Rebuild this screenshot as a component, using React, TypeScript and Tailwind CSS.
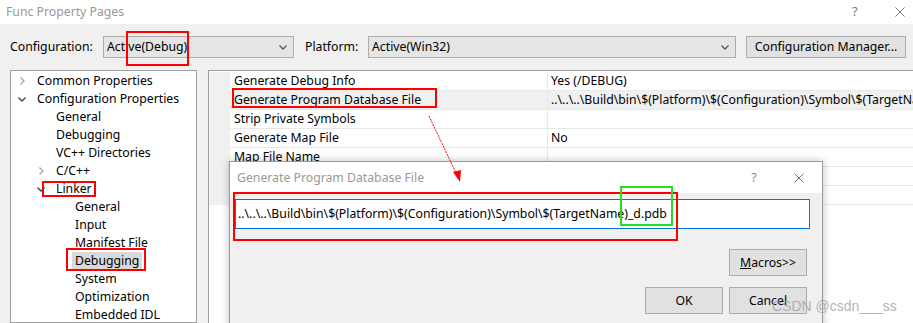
import React from 'react';

// Func Property Pages dialog with the PDB path editor popped over it

type TreeItem = { label: string; level: 0 | 1 | 2; chevron?: 'right' | 'down'; selected?: boolean };

const treeItems: TreeItem[] = [
  { label: 'Common Properties', level: 0, chevron: 'right' },
  { label: 'Configuration Properties', level: 0, chevron: 'down' },
  { label: 'General', level: 1 },
  { label: 'Debugging', level: 1 },
  { label: 'VC++ Directories', level: 1 },
  { label: 'C/C++', level: 1, chevron: 'right' },
  { label: 'Linker', level: 1, chevron: 'down' },
  { label: 'General', level: 2 },
  { label: 'Input', level: 2 },
  { label: 'Manifest File', level: 2 },
  { label: 'Debugging', level: 2, selected: true },
  { label: 'System', level: 2 },
  { label: 'Optimization', level: 2 },
  { label: 'Embedded IDL', level: 2 },
];

const levelPad = ['pl-[7px]', 'pl-[26px]', 'pl-[45px]'];

const gridRows = [
  { name: 'Generate Debug Info', value: 'Yes (/DEBUG)' },
  { name: 'Generate Program Database File', value: '..\\..\\..\\Build\\bin\\$(Platform)\\$(Configuration)\\Symbol\\$(TargetName)_d.pdb', selected: true },
  { name: 'Strip Private Symbols', value: '' },
  { name: 'Generate Map File', value: 'No' },
  { name: 'Map File Name', value: '' },
  { name: 'Map Exports', value: '' },
  { name: 'Debuggable Assembly', value: '' },
];

const ChevronRight = () => (
  <svg width="8" height="8" viewBox="0 0 8 8">
    <path d="M2.5 0.5 L6 4 L2.5 7.5" fill="none" stroke="#a6a6a6" strokeWidth="1.3" />
  </svg>
);

const ChevronDown = ({ color = '#404040' }: { color?: string }) => (
  <svg width="8" height="8" viewBox="0 0 8 8">
    <path d="M0.5 2.5 L4 6 L7.5 2.5" fill="none" stroke={color} strokeWidth="1.3" />
  </svg>
);

const CloseX = ({ size = 10 }: { size?: number }) => (
  <svg width={size} height={size} viewBox="0 0 10 10">
    <path d="M0.5 0.5 L9.5 9.5 M9.5 0.5 L0.5 9.5" stroke="#777" strokeWidth="1" />
  </svg>
);

const Combo = ({ text, className }: { text: string; className: string }) => (
  <div className={`h-[22px] bg-[#e5e5e5] border border-[#adadad] flex items-center pl-[3px] pr-[6px] ${className}`}>
    <span className="flex-1">{text}</span>
    <ChevronDown color="#555" />
  </div>
);

const Box = ({ className }: { className: string }) => (
  <div className={`absolute border-2 pointer-events-none ${className}`} />
);

export default function App() {
  return (
    <div className="relative w-[913px] h-[323px] overflow-hidden bg-[#f0f0f0] font-['Noto_Sans',sans-serif] text-[12.25px] leading-[18px] text-black">
      {/* title bar */}
      <div className="h-[24px] bg-white flex items-center pl-[6px] pr-[8px] text-[#999]">
        <span className="flex-1">Func Property Pages</span>
        <span className="w-[10px] text-center text-[#777]">?</span>
        <span className="ml-[35px]"><CloseX /></span>
      </div>

      {/* configuration row */}
      <div className="h-[46px] flex items-center pl-[10px]">
        <span className="w-[93px]">Configuration:</span>
        <Combo text="Active(Debug)" className="w-[191px]" />
        <span className="ml-[11px] w-[63px]">Platform:</span>
        <Combo text="Active(Win32)" className="w-[368px]" />
        <button className="ml-[10px] w-[160px] h-[22px] bg-[#e1e1e1] border border-[#adadad]">
          Configuration Manager...
        </button>
      </div>

      {/* main panes */}
      <div className="flex h-[253px] pl-[10px]">
        <div className="w-[187px] h-full bg-white border border-[#a0a0a0] overflow-hidden pt-[1px]">
          {treeItems.map((it, i) => (
            <div key={i} className={`h-[18px] flex items-center ${levelPad[it.level]}`}>
              <span className="w-[19px] flex items-center">
                {it.chevron === 'right' && <ChevronRight />}
                {it.chevron === 'down' && <ChevronDown />}
              </span>
              <span className={it.selected ? 'bg-[#d9d9d9] -ml-[3px] px-[3px]' : ''}>{it.label}</span>
            </div>
          ))}
        </div>

        <div className="ml-[11px] flex-1 min-w-0 h-full bg-white border-l border-t border-[#a0a0a0] overflow-hidden pt-[1px]">
          {gridRows.map((r, i) => (
            <div key={i} className="flex h-[19px]">
              <div className="w-[21px] shrink-0 bg-[#f0f0f0]" />
              <div className={`flex flex-1 min-w-0 border-b border-[#e8e8e8] ${r.selected ? 'bg-[#f0f0f0]' : ''}`}>
                <div className="w-[318px] shrink-0 pl-[4px] border-r border-[#e8e8e8] whitespace-nowrap">{r.name}</div>
                <div className="flex-1 min-w-0 pl-[3px] whitespace-nowrap overflow-hidden">{r.value}</div>
              </div>
            </div>
          ))}
        </div>
      </div>

      {/* Generate Program Database File editor window */}
      <div className="absolute left-[229px] top-[161px] w-[594px] h-[180px] bg-[#f0f0f0] border border-[#9a9a9a] shadow-[0_0_8px_rgba(0,0,0,0.25)]">
        <div className="h-[31px] bg-white flex items-center pl-[7px] pr-[18px] text-[#999]">
          <span className="flex-1">Generate Program Database File</span>
          <span className="w-[10px] text-center text-[#888]">?</span>
          <span className="ml-[35px]"><CloseX /></span>
        </div>
        <div className="pt-[6px] pl-[5px] pr-[12px]">
          <div className="h-[30px] bg-white border border-[#0078d7] flex items-center pl-[2px] whitespace-nowrap">
            ..\..\..\Build\bin\$(Platform)\$(Configuration)\Symbol\$(TargetName)_d.pdb
          </div>
          <div className="flex justify-end mt-[20px] pr-[3px]">
            <button className="w-[78px] h-[27px] bg-[#e1e1e1] border border-[#adadad]">
              <span className="underline">M</span>acros&gt;&gt;
            </button>
          </div>
          <div className="flex justify-end gap-[6px] mt-[11px] pr-[3px]">
            <button className="w-[78px] h-[27px] bg-[#e1e1e1] border border-[#adadad]">OK</button>
            <button className="w-[78px] h-[27px] bg-[#e1e1e1] border border-[#adadad]">Cancel</button>
          </div>
        </div>
      </div>

      {/* annotations */}
      <Box className="left-[126px] top-[31px] w-[63px] h-[35px] border-[#ff0000]" />
      <Box className="left-[232px] top-[88px] w-[205px] h-[20px] border-[#ff0000]" />
      <Box className="left-[42px] top-[181px] w-[54px] h-[16px] border-[#ff0000]" />
      <Box className="left-[66px] top-[248px] w-[80px] h-[23px] border-[#ff0000]" />
      <Box className="left-[233px] top-[192px] w-[445px] h-[49px] border-[#ff0000]" />
      <Box className="left-[620px] top-[186px] w-[53px] h-[40px] border-[#22e022]" />

      <svg className="absolute left-0 top-0 pointer-events-none" width="913" height="323">
        <line x1="429" y1="116" x2="457" y2="175" stroke="#ff0000" strokeWidth="1" strokeDasharray="2 1" />
        <polygon points="460,182 453,172 461,170" fill="#ff0000" />
      </svg>

      <div className="absolute left-[772px] top-[296px] font-['Liberation_Sans',sans-serif] text-[14px] leading-[20px] text-[#a0a0a0]/80">
        CSDN @csdn___ss
      </div>
    </div>
  );
}
